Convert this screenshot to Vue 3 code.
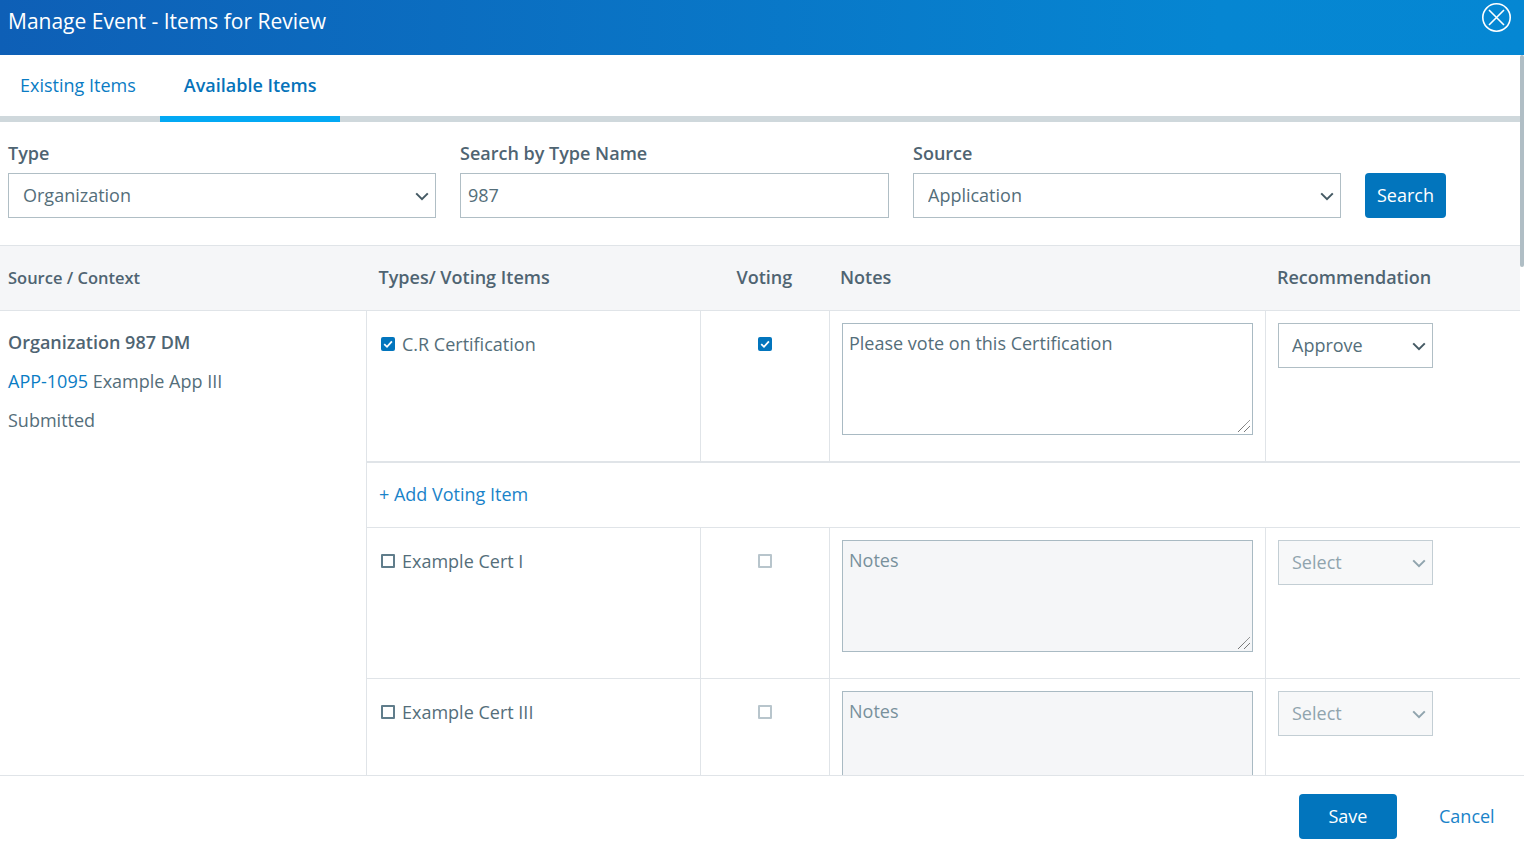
<template>
  <div class="modal">
    <header class="modalHeader">
      <h1>Manage Event - Items for Review</h1>
      <button class="closeBtn" type="button" aria-label="Close">
        <svg width="30" height="30" viewBox="0 0 30 30" fill="none" stroke="#fff">
          <circle cx="14.5" cy="14.5" r="13.7" stroke-width="1.6" />
          <path d="M7 7 22 22M22 7 7 22" stroke-width="1.6" />
        </svg>
      </button>
    </header>

    <div class="scrollThumb"></div>

    <nav class="tabs">
      <a class="tab">Existing Items</a>
      <a class="tab active">Available Items</a>
    </nav>

    <form class="filters" @submit.prevent>
      <label class="field">
        <span>Type</span>
        <div class="selectWrap">
          <select><option>Organization</option></select>
          <svg class="chevron" width="14" height="9" viewBox="0 0 14 9"><path d="M1.2 1.4 7 7.2l5.8-5.8" fill="none" stroke="currentColor" stroke-width="2" /></svg>
        </div>
      </label>
      <label class="field">
        <span>Search by Type Name</span>
        <input v-model="search" type="text" />
      </label>
      <label class="field">
        <span>Source</span>
        <div class="selectWrap">
          <select><option>Application</option></select>
          <svg class="chevron" width="14" height="9" viewBox="0 0 14 9"><path d="M1.2 1.4 7 7.2l5.8-5.8" fill="none" stroke="currentColor" stroke-width="2" /></svg>
        </div>
      </label>
      <button class="primary searchBtn" type="submit">Search</button>
    </form>

    <div class="tableHead">
      <div class="headCell source">Source / Context</div>
      <div class="headCell types">Types/ Voting Items</div>
      <div class="headCell voting">Voting</div>
      <div class="headCell notes">Notes</div>
      <div class="headCell rec">Recommendation</div>
    </div>

    <div class="tableBody">
      <div class="context">
        <strong>Organization 987 DM</strong>
        <p><a>APP-1095</a> Example App III</p>
        <p>Submitted</p>
      </div>
      <div class="items">
        <template v-for="(item, i) in items" :key="item.name">
          <div class="row">
            <div class="cell typeCell">
              <span class="check" :class="item.checked ? 'on' : 'dark'">
                <svg v-if="item.checked" width="14" height="14" viewBox="0 0 14 14"><path d="M3.2 7.2 6 9.8l4.9-5.4" fill="none" stroke="#fff" stroke-width="1.8" /></svg>
              </span>
              {{ item.name }}
            </div>
            <div class="cell voteCell">
              <span class="check" :class="{ on: item.checked }">
                <svg v-if="item.checked" width="14" height="14" viewBox="0 0 14 14"><path d="M3.2 7.2 6 9.8l4.9-5.4" fill="none" stroke="#fff" stroke-width="1.8" /></svg>
              </span>
            </div>
            <div class="cell notesCell">
              <textarea :disabled="!item.checked" :value="item.notes" placeholder="Notes"></textarea>
            </div>
            <div class="cell recCell">
              <div class="selectWrap small" :class="{ off: !item.checked }">
                <select :disabled="!item.checked"><option>{{ item.rec }}</option></select>
                <svg class="chevron" width="14" height="9" viewBox="0 0 14 9"><path d="M1.2 1.4 7 7.2l5.8-5.8" fill="none" stroke="currentColor" stroke-width="2" /></svg>
              </div>
            </div>
          </div>
          <div v-if="i === 0" class="addRow"><a>+ Add Voting Item</a></div>
        </template>
      </div>
    </div>

    <footer class="modalFooter">
      <button class="primary saveBtn" type="button">Save</button>
      <a class="cancel">Cancel</a>
    </footer>
  </div>
</template>

<script setup>
import { ref } from 'vue'

const search = ref('987')

const items = [
  { name: 'C.R Certification', checked: true, notes: 'Please vote on this Certification', rec: 'Approve' },
  { name: 'Example Cert I', checked: false, notes: '', rec: 'Select' },
  { name: 'Example Cert III', checked: false, notes: '', rec: 'Select' }
]
</script>

<style>
html, body {
  margin: 0;
  height: 100%;
  overflow: hidden;
  background: #fff;
}
</style>

<style scoped>
.modal {
  position: relative;
  display: flex;
  flex-direction: column;
  width: 1524px;
  height: 848px;
  overflow: hidden;
  font-family: "Open Sans", "Liberation Sans", sans-serif;
  font-size: 18px;
  color: #546e7a;
  background: #fff;
}

.modalHeader {
  display: flex;
  justify-content: space-between;
  flex: 0 0 55px;
  box-sizing: border-box;
  padding-left: 8px;
  background: linear-gradient(90deg, #0e5fb6 0%, #0686d2 80%, #0587d3 100%);
}
.modalHeader h1 {
  margin: 6px 0 0;
  font-size: 21px;
  line-height: 30px;
  font-weight: 500;
  color: #fff;
}
.closeBtn {
  align-self: flex-start;
  width: 30px;
  height: 30px;
  margin: 3px 12px 0 0;
  padding: 0;
  border: none;
  background: none;
}

.scrollThumb {
  position: absolute;
  top: 55px;
  right: 0;
  width: 4px;
  height: 212px;
  border-radius: 2px;
  background: #b0bec5;
}

.tabs {
  display: flex;
  flex: 0 0 67px;
  box-sizing: border-box;
  width: 1520px;
  border-bottom: 6px solid #cfd8dc;
}
.tab {
  box-sizing: border-box;
  height: 67px;
  margin-bottom: -6px;
  padding: 0 24px;
  line-height: 61px;
  white-space: nowrap;
  color: #0a7cc4;
}
.tab:first-child {
  padding: 0 24px 0 20px;
}
.tab.active {
  width: 180px;
  font-weight: 600;
  color: #0573ba;
  border-bottom: 6px solid #03a9f4;
}

.filters {
  display: flex;
  align-items: flex-end;
  gap: 24px;
  flex: 0 0 124px;
  box-sizing: border-box;
  width: 1520px;
  padding: 0 8px 27px;
  border-bottom: 1px solid #e0e4e8;
}
.field {
  display: flex;
  flex-direction: column;
  width: 428px;
}
.field:nth-child(2) {
  width: 429px;
}
.field > span {
  margin-bottom: 8px;
  line-height: 24px;
  font-weight: 600;
  color: #4f6472;
}
.field input {
  box-sizing: border-box;
  height: 45px;
  padding: 0 7px 2px;
  border: 1px solid #b0bec5;
  outline: none;
  font: inherit;
  color: inherit;
}

.selectWrap {
  position: relative;
  color: #455a64;
}
.selectWrap select {
  display: block;
  box-sizing: border-box;
  width: 100%;
  height: 45px;
  padding: 0 14px 2px;
  border: 1px solid #b0bec5;
  border-radius: 0;
  outline: none;
  appearance: none;
  background: #fff;
  font: inherit;
  color: #546e7a;
}
.chevron {
  position: absolute;
  top: 19px;
  right: 7px;
  pointer-events: none;
}
.selectWrap.small {
  width: 155px;
}
.selectWrap.small select {
  padding-left: 13px;
}
.selectWrap.off {
  color: #90a4ae;
}
.selectWrap.off select {
  background: #f7f8f9;
  border-color: #c3ced4;
  color: #90a4ae;
  opacity: 1;
}

.primary {
  height: 45px;
  padding: 0 0 2px;
  border: none;
  border-radius: 4px;
  background: #0275bd;
  font: inherit;
  font-weight: 500;
  color: #fff;
}
.searchBtn {
  width: 81px;
}

.tableHead {
  display: flex;
  flex: 0 0 65px;
  box-sizing: border-box;
  width: 1520px;
  padding-bottom: 2px;
  align-items: center;
  background: #f5f6f8;
  border-bottom: 1px solid #e0e4e8;
  font-weight: 600;
  color: #4f6472;
}
.headCell.source {
  width: 378.5px;
  padding-left: 8px;
  box-sizing: border-box;
  font-size: 16.5px;
}
.headCell.types {
  width: 358px;
}
.headCell.voting {
  width: 103.5px;
}
.headCell.notes {
  width: 437px;
}

.tableBody {
  display: flex;
  flex: 1;
  min-height: 0;
  width: 1520px;
  overflow: hidden;
}
.context {
  flex: 0 0 367px;
  box-sizing: border-box;
  padding: 18px 8px 0;
  border-right: 1px solid #e0e4e8;
  line-height: 26px;
}
.context strong {
  display: block;
  font-weight: 600;
  color: #4f6472;
}
.context p {
  margin: 13px 0 0;
}
.context a {
  color: #0a7cc4;
}

.items {
  flex: 1;
  min-width: 0;
}
.row {
  display: grid;
  grid-template-columns: 334px 129px 436px 1fr;
  border-bottom: 1px solid #e0e4e8;
}
.row:first-child {
  border-bottom: 2px solid #e0e4e8;
}
.cell {
  height: 150px;
  box-sizing: border-box;
  border-right: 1px solid #e0e4e8;
}
.recCell {
  border-right: none;
  padding: 12px;
}
.typeCell {
  display: flex;
  align-items: flex-start;
  gap: 7px;
  padding: 20px 0 0 14px;
  line-height: 26px;
}
.voteCell {
  display: flex;
  justify-content: center;
  padding-top: 26px;
}
.notesCell {
  padding: 12px 12px 0;
}
.notesCell textarea {
  display: block;
  box-sizing: border-box;
  width: 411px;
  height: 112px;
  padding: 6px;
  border: 1px solid #a9bac3;
  outline: none;
  font: inherit;
  line-height: 26px;
  color: #546e7a;
  background: #fff;
}
.notesCell textarea:disabled {
  background: #f5f6f8;
}
.notesCell textarea::placeholder {
  color: #78909c;
  opacity: 1;
}
.notesCell textarea::-webkit-resizer {
  background: url("data:image/svg+xml,%3Csvg xmlns='http://www.w3.org/2000/svg' width='15' height='15'%3E%3Cpath d='M1 13 13 1M7 13l6-6' stroke='%23444' stroke-width='1' stroke-dasharray='1 .5' fill='none'/%3E%3C/svg%3E") no-repeat;
}

.check {
  display: block;
  flex: none;
  box-sizing: border-box;
  width: 14px;
  height: 14px;
  margin-top: 6px;
  border: 2px solid #b8c5cc;
  border-radius: 1px;
}
.voteCell .check {
  margin-top: 0;
}
.check.dark {
  border-color: #607d8b;
}
.check.on {
  border: none;
  border-radius: 2px;
  background: #0275bd;
}
.check svg {
  display: block;
}

.addRow {
  box-sizing: border-box;
  height: 65px;
  padding: 18px 12px 0;
  border-bottom: 1px solid #e0e4e8;
  line-height: 26px;
  color: #1a83c9;
}

.modalFooter {
  display: flex;
  align-items: flex-start;
  flex: 0 0 73px;
  box-sizing: border-box;
  padding: 18px 29px 0 1299px;
  border-top: 1px solid #e0e4e8;
}
.saveBtn {
  width: 98px;
}
.cancel {
  margin: 9px 0 0 42px;
  line-height: 26px;
  color: #1a83c9;
}
</style>
